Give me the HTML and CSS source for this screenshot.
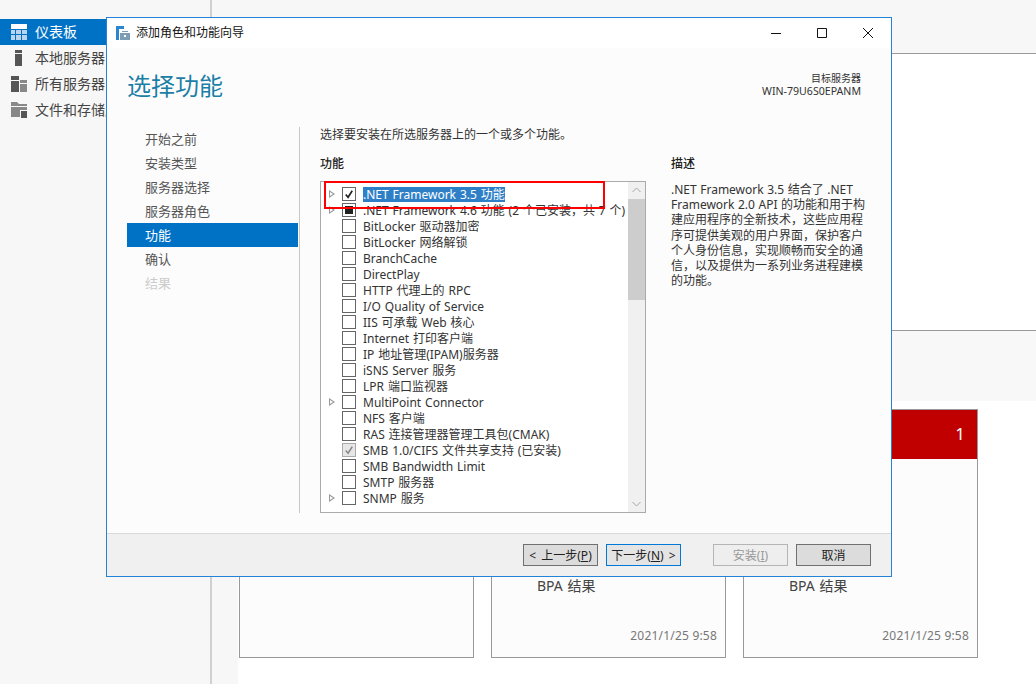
FILE: index.html
```html
<!DOCTYPE html>
<html lang="zh-CN">
<head>
<meta charset="utf-8">
<title>添加角色和功能向导</title>
<link rel="stylesheet" href="styles.css">
</head>
<body>
<div class="desktop">
  <aside class="side">
    <div class="side-item active"><svg class="side-icon" viewBox="0 0 16 16"><path fill="#fff" d="M0 0h16v5H0z"/><path fill="#b9d4ec" d="M0 6h4v4H0zM5 6h5v4H5zM11 6h5v4h-5zM0 11h4v5H0zM5 11h5v5H5zM11 11h5v5h-5z"/></svg><span>仪表板</span></div>
    <div class="side-item"><svg class="side-icon" viewBox="0 0 16 16"><path fill="#555" d="M4 0h7v3H4zM4 4h7v12H4z"/></svg><span>本地服务器</span></div>
    <div class="side-item"><svg class="side-icon" viewBox="0 0 16 16"><path fill="#555" d="M0 0h8v4H0zM0 5h8v11H0z"/><path fill="#888" d="M9 4h7v3H9zM9 8h7v8H9z"/></svg><span>所有服务器</span></div>
    <div class="side-item"><svg class="side-icon" viewBox="0 0 16 16"><path fill="#888" d="M0 0h6l2 2h8v2H0zM0 5h16v3H9v7H0z"/><path fill="#555" d="M10 9h6v7h-6z"/></svg><span>文件和存储服务</span></div>
  </aside>
  <div class="side-rule"></div>
  <main class="page">
    <div class="page-top"></div>
    <div class="page-white"></div>
    <div class="page-band"></div>
    <div class="cards">
      <div class="card"></div>
      <div class="card"><div class="card-head"></div><div class="card-line">BPA 结果</div><div class="card-time">2021/1/25 9:58</div></div>
      <div class="card"><div class="card-head alert"><span>1</span></div><div class="card-line">BPA 结果</div><div class="card-time">2021/1/25 9:58</div></div>
    </div>
  </main>

  <section class="dialog">
    <header class="titlebar">
      <svg class="app-icon" viewBox="0 0 14 14"><path fill="#2b86d0" d="M0 0h8v3H3v11H0z"/><path fill="#7d9db5" d="M4 7h10v7H4z"/><path fill="#7d9db5" d="M6 5h6v1H6z"/><path fill="#fff" d="M8 9h2v2H8z"/></svg>
      <span class="title-text">添加角色和功能向导</span>
      <div class="win-controls">
        <svg class="win-btn" viewBox="0 0 12 12"><path d="M1 6.5h10" stroke="#111" fill="none"/></svg>
        <svg class="win-btn" viewBox="0 0 12 12"><path d="M1.5 1.5h9v9h-9z" stroke="#111" fill="none"/></svg>
        <svg class="win-btn" viewBox="0 0 12 12"><path d="M1 1l10 10M11 1L1 11" stroke="#111" fill="none"/></svg>
      </div>
    </header>
    <div class="dlg-body">
      <div class="dlg-head">
        <h1 class="dlg-title">选择功能</h1>
        <div class="target"><div class="target-label">目标服务器</div><div class="target-name">WIN-79U6S0EPANM</div></div>
      </div>
      <div class="dlg-main">
        <nav class="steps">
          <div class="step">开始之前</div>
          <div class="step">安装类型</div>
          <div class="step">服务器选择</div>
          <div class="step">服务器角色</div>
          <div class="step current">功能</div>
          <div class="step">确认</div>
          <div class="step disabled">结果</div>
        </nav>
        <div class="content">
          <p class="intro">选择要安装在所选服务器上的一个或多个功能。</p>
          <div class="columns">
            <div class="col-list">
              <h2 class="col-title">功能</h2>
              <div class="listbox">
                <ul class="rows">
                  <li class="row"><i class="tw"></i><b class="cb"><svg viewBox="0 0 13 13"><path d="M3 7l2.5 3L10 3" stroke="#222" stroke-width="1.8" fill="none"/></svg></b><span class="sel">.NET Framework 3.5 功能</span></li>
                  <li class="row"><i class="tw"></i><b class="cb"><em class="part"></em></b><span>.NET Framework 4.6 功能 (2 个已安装，共 7 个)</span></li>
                  <li class="row"><i class="tw none"></i><b class="cb"></b><span>BitLocker 驱动器加密</span></li>
                  <li class="row"><i class="tw none"></i><b class="cb"></b><span>BitLocker 网络解锁</span></li>
                  <li class="row"><i class="tw none"></i><b class="cb"></b><span>BranchCache</span></li>
                  <li class="row"><i class="tw none"></i><b class="cb"></b><span>DirectPlay</span></li>
                  <li class="row"><i class="tw none"></i><b class="cb"></b><span>HTTP 代理上的 RPC</span></li>
                  <li class="row"><i class="tw none"></i><b class="cb"></b><span>I/O Quality of Service</span></li>
                  <li class="row"><i class="tw none"></i><b class="cb"></b><span>IIS 可承载 Web 核心</span></li>
                  <li class="row"><i class="tw none"></i><b class="cb"></b><span>Internet 打印客户端</span></li>
                  <li class="row"><i class="tw none"></i><b class="cb"></b><span>IP 地址管理(IPAM)服务器</span></li>
                  <li class="row"><i class="tw none"></i><b class="cb"></b><span>iSNS Server 服务</span></li>
                  <li class="row"><i class="tw none"></i><b class="cb"></b><span>LPR 端口监视器</span></li>
                  <li class="row"><i class="tw"></i><b class="cb"></b><span>MultiPoint Connector</span></li>
                  <li class="row"><i class="tw none"></i><b class="cb"></b><span>NFS 客户端</span></li>
                  <li class="row"><i class="tw none"></i><b class="cb"></b><span>RAS 连接管理器管理工具包(CMAK)</span></li>
                  <li class="row"><i class="tw none"></i><b class="cb locked"><svg viewBox="0 0 13 13"><path d="M3 7l2.5 3L10 3" stroke="#888" stroke-width="1.6" fill="none"/></svg></b><span>SMB 1.0/CIFS 文件共享支持 (已安装)</span></li>
                  <li class="row"><i class="tw none"></i><b class="cb"></b><span>SMB Bandwidth Limit</span></li>
                  <li class="row"><i class="tw none"></i><b class="cb"></b><span>SMTP 服务器</span></li>
                  <li class="row"><i class="tw"></i><b class="cb"></b><span>SNMP 服务</span></li>
                </ul>
                <div class="scroll">
                  <svg class="arrow" viewBox="0 0 16 17"><path d="M4 10l4-4 4 4" stroke="#a6a6a6" fill="none"/></svg>
                  <div class="thumb"></div>
                  <svg class="arrow end" viewBox="0 0 16 17"><path d="M4 7l4 4 4-4" stroke="#a6a6a6" fill="none"/></svg>
                </div>
                <div class="callout"></div>
              </div>
            </div>
            <div class="col-desc">
              <h2 class="col-title">描述</h2>
              <p class="desc">.NET Framework 3.5 结合了 .NET<br>Framework 2.0 API 的功能和用于构<br>建应用程序的全新技术，这些应用程<br>序可提供美观的用户界面，保护客户<br>个人身份信息，实现顺畅而安全的通<br>信，以及提供为一系列业务进程建模<br>的功能。</p>
            </div>
          </div>
        </div>
      </div>
    </div>
    <footer class="dlg-foot">
      <button class="btn">&lt; 上一步(<u>P</u>)</button>
      <button class="btn next">下一步(<u>N</u>) &gt;</button>
      <button class="btn off">安装(<u>I</u>)</button>
      <button class="btn cancel">取消</button>
    </footer>
  </section>
</div>
</body>
</html>
```
FILE: styles.css
```css
* { box-sizing: border-box; }
html, body { margin: 0; height: 100%; overflow: hidden; background: #fff; }
body { font-family: "Noto Sans", "Noto Sans CJK SC", sans-serif; font-size: 12px; color: #333; }
.desktop { position: relative; display: flex; width: 1036px; height: 684px; background: #fff; }

.side { width: 210px; flex: none; background: #f7f7f7; padding-top: 19px; }
.side-item { display: flex; align-items: center; height: 26px; padding-left: 11px; gap: 8px; font-size: 14px; color: #444; white-space: nowrap; overflow: hidden; }
.side-item span { margin-top: -2px; }
.side-item.active { background: #0072c6; color: #fff; }
.side-icon { width: 16px; height: 16px; flex: none; }
.side-rule { width: 2px; flex: none; background: #d0d0d0; }

.page { flex: 1; display: flex; flex-direction: column; background: #fff; border-left: 26px solid #f7f7f7; position: relative; }
.page-top { height: 54px; margin-left: -26px; background: #f7f7f7; border-bottom: 1px solid #999; }
.page-white { height: 277px; margin-left: -26px; background: #fff; border-bottom: 1px solid #999; }
.page-band { height: 70px; margin-left: -26px; background: #f8f8f8; }
.cards { display: flex; gap: 17px; padding: 8px 0 0 1px; }
.card { width: 235px; height: 249px; flex: none; border: 1px solid #999; background: #fcfcfc; position: relative; }
.card-head { height: 49px; }
.card-head.alert { background: #c00000; color: #fff; font-size: 17px; display: flex; align-items: center; justify-content: flex-end; padding: 0 12px 2px 0; }
.card-line { position: absolute; left: 45px; top: 166px; font-size: 14px; line-height: 20px; color: #444; word-spacing: 1px; }
.card-time { position: absolute; right: 8px; top: 217px; line-height: 18px; color: #777; letter-spacing: .2px; }

.dialog { position: absolute; left: 106px; top: 17px; width: 786px; height: 560px; border: 1px solid #2383d6; background: #fcfcfc; display: flex; flex-direction: column; }
.titlebar { height: 30px; flex: none; background: #fff; display: flex; align-items: center; padding-left: 9px; color: #111; }
.app-icon { width: 14px; height: 14px; margin-right: 6px; }
.title-text { line-height: 16px; }
.win-controls { margin-left: auto; display: flex; align-items: center; gap: 34px; padding-right: 17px; }
.win-btn { width: 12px; height: 12px; display: block; }

.dlg-body { flex: 1; min-height: 0; }
.dlg-head { height: 79px; display: flex; justify-content: space-between; padding: 21px 30px 0 20px; }
.dlg-title { margin: 0; font-size: 24px; font-weight: 400; line-height: 34px; color: #1b7ea6; }
.target { text-align: right; line-height: 13px; color: #333; padding-top: 3px; }
.target-label { font-size: 10px; }
.target-name { font-size: 10.6px; }

.dlg-main { display: flex; height: 386px; padding-left: 20px; }
.steps { width: 171px; flex: none; }
.step { height: 24px; line-height: 24px; padding-left: 18px; font-size: 13px; color: #555; }
.step.current { background: #0072c6; color: #fff; }
.step.disabled { color: #ccc; }

.content { flex: 1; margin-left: 1px; border-left: 1px solid #c8c8c8; padding-left: 20px; display: flex; flex-direction: column; }
.intro { margin: 0; height: 29px; line-height: 15px; }
.columns { display: flex; gap: 25px; flex: 1; min-height: 0; }
.col-list { width: 326px; flex: none; display: flex; flex-direction: column; }
.col-title { margin: 0; font-size: 12px; font-weight: 500; line-height: 16px; height: 25px; color: #222; }
.listbox { position: relative; height: 332px; border: 1px solid #aaa; background: #fff; display: flex; }
.rows { list-style: none; margin: 0; padding: 4px 0 0; flex: 1; min-width: 0; }
.row { display: flex; align-items: center; height: 16px; white-space: nowrap; color: #333; word-spacing: .75px; }
.tw { width: 0; height: 0; margin-left: 8px; flex: none; border-left: 6px solid #999; border-top: 4px solid transparent; border-bottom: 4px solid transparent; position: relative; }
.tw::after { content: ""; position: absolute; left: -5px; top: -2px; border-left: 3px solid #fff; border-top: 2px solid transparent; border-bottom: 2px solid transparent; }
.tw.none { visibility: hidden; }
.cb { width: 14px; height: 14px; margin-left: 7px; margin-right: 7px; flex: none; border: 1px solid #666; background: #fff; display: flex; align-items: center; justify-content: center; }
.cb svg { width: 12px; height: 12px; display: block; }
.cb.locked { background: #e6e6e6; border-color: #aaa; }
.part { display: block; width: 8px; height: 8px; background: #222; }
.sel { background: #2f7fc7; color: #fff; align-self: flex-start; height: 15px; margin-top: 1px; line-height: 16px; }
.scroll { width: 17px; flex: none; background: #f0f0f0; display: flex; flex-direction: column; }
.arrow { width: 17px; height: 17px; display: block; flex: none; }
.arrow.end { margin-top: auto; }
.thumb { height: 101px; background: #cdcdcd; }
.callout { position: absolute; left: 3px; top: -1px; width: 281px; height: 28px; border: 2px solid #f00; }

.col-desc { flex: 1; min-width: 0; }
.desc { margin: 0; padding-top: 1px; line-height: 15.2px; white-space: nowrap; color: #333; word-spacing: .4px; }

.dlg-foot { height: 43px; flex: none; margin-top: 20px; background: #f0f0f0; border-top: 1px solid #d9d9d9; display: flex; align-items: flex-start; padding: 10px 0 0 416px; }
.btn { width: 75px; height: 22px; flex: none; padding: 1px 0 0; margin: 0 8px 0 0; border: 1px solid #707070; background: #dcdcdc; font: inherit; color: #222; line-height: 18px; word-spacing: 2px; }
.btn.next { border-color: #0078d7; background: #e4e4e4; margin-right: 32px; }
.btn.off { border-color: #b5b5b5; background: #eee; color: #999; }
.btn.cancel { margin-right: 0; }
```
